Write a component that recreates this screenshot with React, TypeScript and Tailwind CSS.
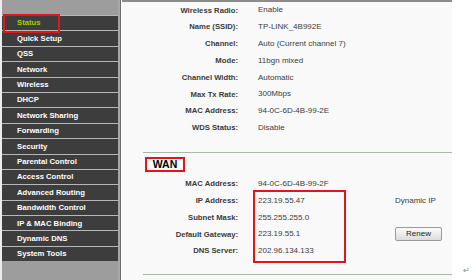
// 라우터 상태 페이지 (TP-LINK 스타일)
import React from "react";

const menu = [
  "Status",
  "Quick Setup",
  "QSS",
  "Network",
  "Wireless",
  "DHCP",
  "Network Sharing",
  "Forwarding",
  "Security",
  "Parental Control",
  "Access Control",
  "Advanced Routing",
  "Bandwidth Control",
  "IP & MAC Binding",
  "Dynamic DNS",
  "System Tools",
];

const wireless = [
  ["Wireless Radio:", "Enable"],
  ["Name (SSID):", "TP-LINK_4B992E"],
  ["Channel:", "Auto (Current channel 7)"],
  ["Mode:", "11bgn mixed"],
  ["Channel Width:", "Automatic"],
  ["Max Tx Rate:", "300Mbps"],
  ["MAC Address:", "94-0C-6D-4B-99-2E"],
  ["WDS Status:", "Disable"],
];

const wan = [
  ["MAC Address:", "94-0C-6D-4B-99-2F"],
  ["IP Address:", "223.19.55.47"],
  ["Subnet Mask:", "255.255.255.0"],
  ["Default Gateway:", "223.19.55.1"],
  ["DNS Server:", "202.96.134.133"],
];

const Row = ({ label, value, extra }: { label: string; value: string; extra?: React.ReactNode }) => (
  <div className="flex h-[16.8px] items-center">
    <div className="w-[116px] shrink-0 text-right text-[7.7px] font-bold text-[#3a3a3a]">{label}</div>
    <div className="ml-[20px] w-[137px] shrink-0 text-[8px] text-[#3c3c3c]">{value}</div>
    {extra}
  </div>
);

const App = () => {
  return (
    <div className="flex h-[280px] w-[474px] overflow-hidden bg-white font-['Liberation_Sans',Arial,sans-serif]">
      {/* 사이드 메뉴 */}
      <aside className="relative flex h-full w-[122px] shrink-0">
        <div className="w-[2px] bg-[#ececec]" />
        <div className="flex w-[116px] flex-col bg-[#9d9d9d]">
          <div className="h-[15px] shrink-0" />
          {menu.map((item, i) => (
            <div
              key={item}
              className={`flex h-[15.4px] shrink-0 items-center border-t border-[#b8b8b8] bg-[#3d3d3d] pl-[15px] text-[7.7px] font-bold ${
                i === 0 ? "text-[#9fd000]" : "text-white"
              }`}
            >
              {item}
            </div>
          ))}
        </div>
        <div className="w-[2px] bg-[#a8a8a8]" />
        <div className="w-[1px] bg-[#6e6e6e]" />
        <div className="w-[1px] bg-white" />
        {/* Status 강조 박스 */}
        <div className="absolute left-[3px] top-[14px] h-[19px] w-[57px] border-2 border-[#e3151a]" />
      </aside>

      {/* 본문 */}
      <main className="relative flex w-[330px] shrink-0 flex-col bg-[#f9f9f9]">
        <div className="h-[2px] bg-[#8c8c8c]" />
        {wireless.map(([l, v]) => (
          <Row key={l} label={l} value={v} />
        ))}

        <div className="mt-[15.6px] ml-[21px] h-[1.5px] bg-[#a9b8a8]" />
        <div className="mt-[3.5px] ml-[23px] flex h-[15px] w-[40px] items-center justify-center border-2 border-[#e3151a] text-[10.5px] font-bold text-black">
          WAN
        </div>

        <div className="mt-[3.6px]">
          {wan.map(([l, v]) => (
            <Row
              key={l}
              label={l}
              value={v}
              extra={
                l === "IP Address:" ? (
                  <span className="text-[8px] text-[#3c3c3c]">Dynamic IP</span>
                ) : l === "Default Gateway:" ? (
                  <button className="flex h-[14px] w-[47px] items-center justify-center rounded-[2px] border border-[#9a9a9a] bg-gradient-to-b from-[#fbfbfb] to-[#dcdcdc] text-[8px] text-[#222]">
                    Renew
                  </button>
                ) : null
              }
            />
          ))}
        </div>

        <div className="mt-[14px] ml-[21px] h-[1.5px] bg-[#a9b8a8]" />

        {/* WAN 값 강조 박스 */}
        <div className="absolute left-[131px] top-[190px] h-[73px] w-[93px] border-2 border-[#e3151a]" />
      </main>

      <div className="flex flex-1 items-end justify-center pb-[3px] pl-[6px] text-[8px] text-[#888]">↵</div>
    </div>
  );
};

export default App;
